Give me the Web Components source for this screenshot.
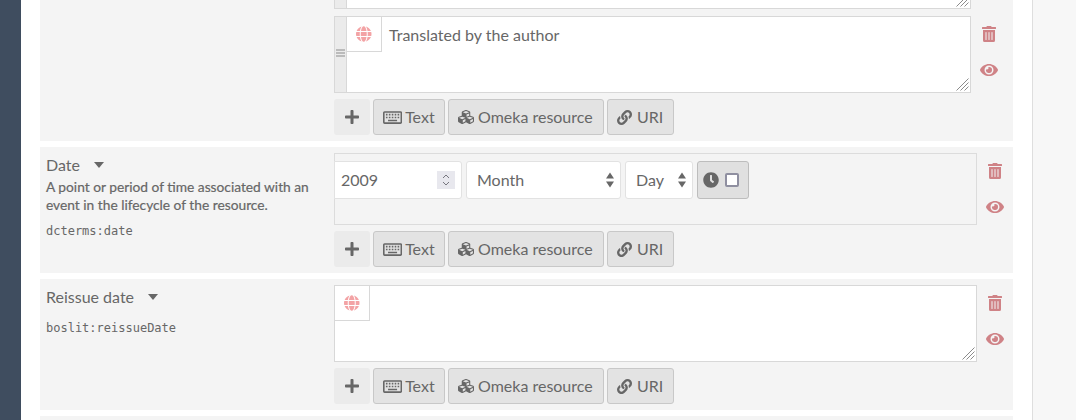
<!DOCTYPE html>
<html>
<head>
  <title>Edit item</title>
  <style>
    html, body { margin: 0; height: 420px; overflow: hidden; background: #fff; }
    body { font-family: Lato, "Open Sans", sans-serif; color: #676767; }
  </style>
</head>
<body>
  <template id="add-row-template">
    <style>
      :host { display: flex; gap: 3px; height: 36px; }
      .plus { width: 36px; background: #ebebeb; border-radius: 3px; display: flex; align-items: center; justify-content: center; }
      .btn { display: flex; align-items: center; gap: 4px; box-sizing: border-box; height: 36px; border: 1px solid #c8c8c8; border-radius: 3px; background: #e3e3e3; font-size: 16px; line-height: 20px; padding: 0 0 1px 9px; }
      .text { width: 72px; gap: 3px; }
      .omeka { width: 156px; }
      .uri { width: 67px; gap: 5px; }
      .btn fa-icon { margin-bottom: -1px; }
    </style>
    <div class="plus"><fa-icon name="plus" size="16"></fa-icon></div>
    <div class="btn text"><fa-icon name="keyboard" size="17"></fa-icon>Text</div>
    <div class="btn omeka"><fa-icon name="cubes" size="16"></fa-icon>Omeka resource</div>
    <div class="btn uri"><fa-icon name="link" size="15"></fa-icon>URI</div>
  </template>

  <template id="value-actions-template">
    <style>
      :host { display: flex; flex-direction: column; width: 36px; flex: none; color: #cf8286; }
      div { height: 36px; display: flex; align-items: center; justify-content: center; }
    </style>
    <div><fa-icon name="trash" size="16"></fa-icon></div>
    <div><fa-icon name="eye" size="16"></fa-icon></div>
  </template>

  <template id="text-value-template">
    <style>
      :host { display: flex; box-sizing: border-box; flex: 1; border: 1px solid #d8d8d8; background: #fff; position: relative; height: 77px; }
      .handle { display: none; width: 11px; flex: none; background: #ebebeb; border-right: 1px solid #d8d8d8; flex-direction: column; align-items: center; justify-content: center; gap: 1px; padding-bottom: 3px; }
      .handle i { display: block; width: 9px; height: 2px; background: #bbb; }
      :host([sortable]) .handle { display: flex; }
      .lang { box-sizing: border-box; width: 35px; height: 35px; border-right: 1px solid #d8d8d8; border-bottom: 1px solid #d8d8d8; flex: none; display: flex; align-items: center; justify-content: center; color: #f3a3a5; }
      .body { font-size: 16px; padding: 8px 0 0 7px; line-height: 20px; }
      svg { position: absolute; right: 1px; bottom: 1px; }
    </style>
    <div class="handle"><i></i><i></i><i></i></div>
    <div class="lang"><fa-icon name="globe" size="16"></fa-icon></div>
    <div class="body"><slot></slot></div>
    <svg width="13" height="13" viewBox="0 0 13 13" stroke="#8b8b8b" stroke-width="1"><path d="M0.5 12.5 12.5 0.5M4.5 12.5 12.5 4.5M8.5 12.5 12.5 8.5"/></svg>
  </template>

  <template id="date-value-template">
    <style>
      :host { display: flex; flex: 1; box-sizing: border-box; height: 72px; border: 1px solid #dcdcdc; padding-top: 7px; gap: 4px; align-items: flex-start; font-size: 16px; line-height: 20px; }
      .field { box-sizing: border-box; height: 38px; background: #fff; border: 1px solid #e2e2e2; border-radius: 3px; display: flex; align-items: center; justify-content: space-between; }
      .year { width: 128px; margin-left: -1px; padding: 0 6px; border-radius: 0 3px 3px 0; }
      .spin { width: 18px; height: 18px; background: #e8e8ee; display: block; }
      .month { width: 155px; padding: 0 6px 0 10px; }
      .day { width: 68px; padding: 0 6px 0 10px; }
      .time { box-sizing: border-box; width: 52px; height: 38px; background: #e0e0e0; border: 1px solid #bdbdbd; border-radius: 3px; display: flex; align-items: center; padding-left: 5px; gap: 6px; }
      .check { box-sizing: border-box; width: 14px; height: 14px; background: #fff; border: 2px solid #8f8fa0; border-radius: 2px; }
    </style>
    <div class="field year"><span>2009</span>
      <svg class="spin" viewBox="0 0 18 18" fill="none" stroke="#77777f" stroke-width="1"><path d="M6 7 9 4 12 7M6 11 9 14 12 11"/></svg>
    </div>
    <div class="field month"><span>Month</span><select-arrows></select-arrows></div>
    <div class="field day"><span>Day</span><select-arrows></select-arrows></div>
    <div class="time"><fa-icon name="clock" size="16"></fa-icon><div class="check"></div></div>
  </template>

  <template id="property-row-template">
    <style>
      :host { display: flex; background: #f4f4f4; padding-top: 6px; }
      .label { width: 288px; flex: none; padding-left: 6px; }
      .name { font-size: 16px; line-height: 24px; display: flex; align-items: center; gap: 14px; }
      .name i { display: block; border: 5.5px solid transparent; border-top: 6px solid #676767; border-bottom: 0; }
      .desc { font-size: 13.75px; line-height: 18px; width: 272px; margin: 1px 0 -2px; -webkit-text-stroke: .2px #676767; }
      .desc:empty { display: none; }
      .term { font: 12px/16px "DejaVu Sans Mono", "Liberation Mono", monospace; margin-top: 11px; }
      .values { flex: 1; min-width: 0; display: flex; flex-direction: column; gap: 6px; padding-bottom: 6px; }
    </style>
    <div class="label">
      <div class="name"><span id="name"></span><i></i></div>
      <div class="desc" id="desc"></div>
      <div class="term" id="term"></div>
    </div>
    <div class="values"><slot></slot><add-row></add-row></div>
  </template>

  <template id="value-line-template">
    <style>
      :host { display: flex; }
      :host([inset]) { margin-right: 6px; }
    </style>
    <slot></slot><value-actions></value-actions>
  </template>

  <template id="app-shell-template">
    <style>
      :host { display: flex; height: 420px; overflow: hidden; }
      .rail { width: 21px; flex: none; background: #3f4d5f; }
      main { width: 973px; flex: none; margin-left: 19px; display: flex; flex-direction: column; gap: 6px; }
      aside { flex: 1; margin-left: 19px; border-left: 1px solid #dedede; background: #f7f7f7; }
    </style>
    <div class="rail"></div>
    <main><slot></slot></main>
    <aside></aside>
  </template>

  <app-shell>
    <property-row style="margin-top:-74px">
      <value-line inset style="margin-bottom:1px"><text-value sortable></text-value></value-line>
      <value-line inset><text-value sortable>Translated by the author</text-value></value-line>
    </property-row>
    <property-row name="Date" desc="A point or period of time associated with an event in the lifecycle of the resource." term="dcterms:date">
      <value-line><date-value></date-value></value-line>
    </property-row>
    <property-row name="Reissue date" term="boslit:reissueDate">
      <value-line><text-value></text-value></value-line>
    </property-row>
    <property-row style="height:40px; flex:none"></property-row>
  </app-shell>

  <script>
    const ICONS = {
      plus: [448, 512, 'M416 208H272V64c0-17.67-14.33-32-32-32h-32c-17.67 0-32 14.33-32 32v144H32c-17.67 0-32 14.33-32 32v32c0 17.67 14.33 32 32 32h144v144c0 17.67 14.33 32 32 32h32c17.67 0 32-14.33 32-32V304h144c17.67 0 32-14.33 32-32v-32c0-17.67-14.33-32-32-32z'],
      trash: [448, 512, 'M32 464a48 48 0 0 0 48 48h288a48 48 0 0 0 48-48V128H32zm272-256a16 16 0 0 1 32 0v224a16 16 0 0 1-32 0zm-96 0a16 16 0 0 1 32 0v224a16 16 0 0 1-32 0zm-96 0a16 16 0 0 1 32 0v224a16 16 0 0 1-32 0zM432 32H312l-9.4-18.7A24 24 0 0 0 281.1 0H166.8a23.72 23.72 0 0 0-21.4 13.3L136 32H16A16 16 0 0 0 0 48v32a16 16 0 0 0 16 16h416a16 16 0 0 0 16-16V48a16 16 0 0 0-16-16z'],
      eye: [576, 512, 'M572.52 241.4C518.29 135.59 410.93 64 288 64S57.68 135.64 3.48 241.41a32.35 32.35 0 0 0 0 29.19C57.71 376.41 165.07 448 288 448s230.32-71.64 284.52-177.41a32.35 32.35 0 0 0 0-29.19zM288 400a144 144 0 1 1 144-144 143.93 143.93 0 0 1-144 144zm0-240a95.31 95.31 0 0 0-25.31 3.79 47.85 47.85 0 0 1-66.9 66.9A95.78 95.78 0 1 0 288 160z'],
      clock: [512, 512, 'M256,8C119,8,8,119,8,256S119,504,256,504,504,393,504,256,393,8,256,8Zm92.49,313h0l-20,25a16,16,0,0,1-22.49,2.5h0l-67-49.72a40,40,0,0,1-15-31.23V112a16,16,0,0,1,16-16h32a16,16,0,0,1,16,16V256l58,42.5A16,16,0,0,1,348.49,321Z'],
      link: [512, 512, 'M326.612 185.391c59.747 59.809 58.927 155.698.36 214.59-.11.12-.24.25-.36.37l-67.2 67.2c-59.27 59.27-155.699 59.262-214.96 0-59.27-59.26-59.27-155.7 0-214.96l37.106-37.106c9.84-9.84 26.786-3.3 27.294 10.606.648 17.722 3.826 35.527 9.69 52.721 1.986 5.822.567 12.262-3.783 16.612l-13.087 13.087c-28.026 28.026-28.905 73.66-1.155 101.96 28.024 28.579 74.086 28.749 102.325.51l67.2-67.19c28.191-28.191 28.073-73.757 0-101.83-3.701-3.694-7.429-6.564-10.341-8.569a16.037 16.037 0 0 1-6.947-12.606c-.396-10.567 3.348-21.456 11.698-29.806l21.054-21.055c5.521-5.521 14.182-6.199 20.584-1.731a152.482 152.482 0 0 1 20.522 17.197zM467.547 44.449c-59.261-59.262-155.69-59.27-214.96 0l-67.2 67.2c-.12.12-.25.25-.36.37-58.566 58.892-59.387 154.781.36 214.59a152.454 152.454 0 0 0 20.521 17.196c6.402 4.468 15.064 3.789 20.584-1.731l21.054-21.055c8.35-8.35 12.094-19.239 11.698-29.806a16.037 16.037 0 0 0-6.947-12.606c-2.912-2.005-6.64-4.875-10.341-8.569-28.073-28.073-28.191-73.639 0-101.83l67.2-67.19c28.239-28.239 74.3-28.069 102.325.51 27.75 28.3 26.872 73.934-1.155 101.96l-13.087 13.087c-4.35 4.35-5.769 10.79-3.783 16.612 5.864 17.194 9.042 34.999 9.69 52.721.509 13.906 17.454 20.446 27.294 10.606l37.106-37.106c59.271-59.259 59.271-155.699.001-214.959z'],
      globe: [496, 512, 'M336.5 160C322 70.7 287.8 8 248 8s-74 62.7-88.5 152h177zM152 256c0 22.2 1.2 43.5 3.3 64h185.3c2.1-20.5 3.3-41.8 3.3-64s-1.2-43.5-3.3-64H155.3c-2.1 20.5-3.3 41.8-3.3 64zm324.7-96c-28.6-67.9-86.5-120.4-158-141.6 24.4 33.8 41.2 84.7 50 141.6h108zM177.2 18.4C105.8 39.6 47.8 92.1 19.3 160h108c8.7-56.9 25.5-107.8 49.9-141.6zM487.4 192H372.7c2.1 21 3.3 42.5 3.3 64s-1.2 43-3.3 64h114.6c5.5-20.5 8.6-41.8 8.6-64s-3.1-43.5-8.5-64zM120 256c0-21.5 1.2-43 3.3-64H8.6C3.2 212.5 0 233.8 0 256s3.2 43.5 8.6 64h114.6c-2-21-3.2-42.5-3.2-64zm39.5 96c14.5 89.3 48.7 152 88.5 152s74-62.7 88.5-152h-177zm159.3 141.6c71.4-21.2 129.4-73.7 158-141.6h-108c-8.8 56.9-25.6 107.8-50 141.6zM19.3 352c28.6 67.9 86.5 120.4 158 141.6-24.4-33.8-41.2-84.7-50-141.6h-108z'],
      // outlined keyboard, keys cut out of the body
      keyboard: [576, 512, 'M48 64h480a48 48 0 0 1 48 48v288a48 48 0 0 1-48 48H48a48 48 0 0 1-48-48V112a48 48 0 0 1 48-48zm0 48v288h480V112zM88 144h48v48H88zm88 0h48v48h-48zm88 0h48v48h-48zm88 0h48v48h-48zm88 0h48v48h-48zM88 232h48v48H88zm88 0h48v48h-48zm88 0h48v48h-48zm88 0h48v48h-48zm88 0h48v48h-48zM152 320h272v48H152z'],
      cubes: [512, 512, 'M488.6 250.2L392 214V105.5c0-15-9.3-28.4-23.4-33.7l-100-37.5c-8.1-3.1-17.1-3.1-25.3 0l-100 37.5c-14.1 5.3-23.4 18.7-23.4 33.7V214l-96.6 36.2C9.3 255.5 0 268.9 0 283.9V394c0 13.6 7.7 26.1 19.9 32.2l100 50c10.1 5.1 22.1 5.1 32.2 0l103.9-52 103.9 52c10.1 5.1 22.1 5.1 32.2 0l100-50c12.2-6.1 19.9-18.6 19.9-32.2V283.9c0-15-9.3-28.4-23.4-33.7zM358 214.8l-85 31.9v-68.2l85-37v73.3zM154 104.1l102-38.2 102 38.2v.6l-102 41.4-102-41.4v-.6zm84 291.1l-85 42.5v-79.1l85-38.8v75.4zm0-112l-102 41.4-102-41.4v-.6l102-38.2 102 38.2v.6zm240 112l-85 42.5v-79.1l85-38.8v75.4zm0-112l-102 41.4-102-41.4v-.6l102-38.2 102 38.2v.6z']
    }

    customElements.define('fa-icon', class extends HTMLElement {
      connectedCallback() {
        if (this.shadowRoot) return
        const [w, h, d] = ICONS[this.getAttribute('name')]
        const size = +this.getAttribute('size')
        const root = this.attachShadow({ mode: 'open' })
        root.innerHTML = `<style>:host { display: block; line-height: 0; } svg { display: block; fill: currentColor; }</style>
          <svg width="${size * w / h}" height="${size}" viewBox="0 0 ${w} ${h}"><path fill-rule="evenodd" d="${d}"/></svg>`
      }
    })

    customElements.define('select-arrows', class extends HTMLElement {
      constructor() {
        super()
        this.attachShadow({ mode: 'open' }).innerHTML = `<style>:host { display: block; line-height: 0; }</style>
          <svg width="8" height="16" viewBox="0 0 8 16" fill="#676767"><path d="M4 0.5 8 6.5H0zM4 15.5 0 9.5H8z"/></svg>`
      }
    })

    // elements which only clone their template
    for (const tag of ['add-row', 'value-actions', 'text-value', 'date-value', 'value-line', 'app-shell']) {
      customElements.define(tag, class extends HTMLElement {
        constructor() {
          super()
          const template = document.getElementById(tag + '-template').content
          this.attachShadow({ mode: 'open' }).appendChild(template.cloneNode(true))
        }
      })
    }

    customElements.define('property-row', class extends HTMLElement {
      constructor() {
        super()
        const template = document.getElementById('property-row-template').content
        this.attachShadow({ mode: 'open' }).appendChild(template.cloneNode(true))
      }

      connectedCallback() {
        const root = this.shadowRoot
        root.querySelector('#name').textContent = this.getAttribute('name') || ''
        root.querySelector('#desc').textContent = this.getAttribute('desc') || ''
        root.querySelector('#term').textContent = this.getAttribute('term') || ''
        if (!this.getAttribute('name')) root.querySelector('.name').style.visibility = 'hidden'
        if (this.children.length === 0) root.querySelector('.values').style.visibility = 'hidden'
      }
    })
  </script>
</body>
</html>
